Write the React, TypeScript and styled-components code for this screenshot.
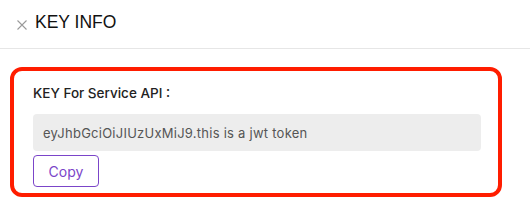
import styled, { createGlobalStyle } from 'styled-components';

const GlobalStyle = createGlobalStyle`
  body {
    margin: 0;
    background: #fff;
    font-family: Inter, "Noto Sans", sans-serif;
  }
`;

const Header = styled.header`
  height: 49px;
  box-sizing: border-box;
  display: flex;
  align-items: center;
  gap: 8px;
  padding: 0 0 3px 17px;
  border-bottom: 1px solid #e6e6e6;
`;

const CloseButton = styled.button`
  border: none;
  background: none;
  padding: 0;
  margin-top: 5px;
  display: flex;
  color: #9a9a9a;
  cursor: pointer;
`;

const Title = styled.h1`
  margin: 0;
  font-family: "Liberation Sans", Arial, sans-serif;
  font-size: 17.5px;
  font-weight: 400;
  color: #111;
`;

const Highlight = styled.section`
  margin: 18px 0 0 10px;
  width: 492px;
  box-sizing: border-box;
  border: 4px solid #ff1d00;
  border-radius: 12px;
  padding: 12px 17px 6px 19px;
  display: flex;
  flex-direction: column;
`;

const Label = styled.div`
  font-size: 13.5px;
  font-weight: 500;
  color: #222;
  line-height: 20px;
  margin-bottom: 11px;
`;

const TokenBox = styled.div`
  height: 37px;
  background: #ededed;
  border-radius: 4px;
  display: flex;
  align-items: center;
  padding: 0 10px;
  font-size: 13px;
  letter-spacing: 0.25px;
  color: #555;
`;

const CopyButton = styled.button`
  margin-top: 4px;
  align-self: flex-start;
  width: 66px;
  height: 32px;
  border: 1px solid #7b45c9;
  border-radius: 4px;
  background: #fff;
  color: #7b45c9;
  font-family: Inter, "Noto Sans", sans-serif;
  font-size: 14px;
  cursor: pointer;
`;

export default function App() {
  return (
    <>
      <GlobalStyle />
      <Header>
        <CloseButton aria-label="close">
          <svg width="10" height="10" viewBox="0 0 10 10">
            <path d="M0.5 0.5 L9.5 9.5 M9.5 0.5 L0.5 9.5" stroke="currentColor" strokeWidth="1.1" fill="none" />
          </svg>
        </CloseButton>
        <Title>KEY INFO</Title>
      </Header>
      <Highlight>
        <Label>KEY For Service API :</Label>
        <TokenBox>eyJhbGciOiJIUzUxMiJ9.this is a jwt token</TokenBox>
        <CopyButton>Copy</CopyButton>
      </Highlight>
    </>
  );
}
